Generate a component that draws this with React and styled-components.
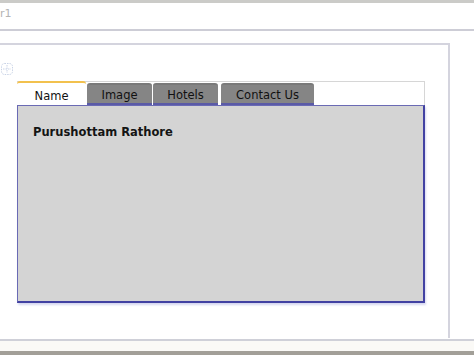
import React from "react";
import styled, { createGlobalStyle } from "styled-components";

const GlobalStyle = createGlobalStyle`
  html, body {
    margin: 0;
    padding: 0;
    background: #ffffff;
  }
  body {
    width: 474px;
    height: 355px;
    overflow: hidden;
    font-family: "DejaVu Sans", Tahoma, sans-serif;
  }
`;

// ---------- Designer frame ----------
const Page = styled.div`
  display: flex;
  flex-direction: column;
  align-items: flex-start;
  width: 474px;
  height: 355px;
  background: #ffffff;
`;

const TopStrip = styled.div`
  align-self: stretch;
  height: 3px;
  background: #cbcbc8;
`;

const TitleRow = styled.div`
  align-self: stretch;
  height: 28px;
  padding: 4px 0 0 0;
  box-sizing: border-box;
  color: #b4b4b4;
  font-size: 11px;
  border-bottom: 2px solid #cdcdd6;
`;

const Spacer = styled.div`
  height: 12px;
`;

const Panel = styled.div`
  width: 448px;
  height: 293px;
  box-sizing: content-box;
  border-top: 2px solid #d4d4de;
  border-right: 2px solid #d4d4de;
  display: flex;
  flex-direction: column;
`;

const Glyph = styled.div`
  height: 14px;
  margin: 17px 0 5px 0;
  display: flex;
`;

const BottomLine = styled.div`
  align-self: stretch;
  height: 2px;
  margin-top: 1px;
  background: #cfd0d8;
`;

const BottomFill = styled.div`
  align-self: stretch;
  flex: 1;
  background: #faf9f6;
`;

const StatusBar = styled.div`
  align-self: stretch;
  height: 4px;
  background: #a29f98;
`;

// ---------- Tab control ----------
const TabControl = styled.div`
  width: 408px;
  margin-left: 17px;
  display: flex;
  flex-direction: column;
`;

const TabHeader = styled.div`
  height: 24px;
  display: flex;
  align-items: flex-end;
  gap: 1px;
  border-top: 1px solid #d6d6d6;
  border-right: 1px solid #d6d6d6;
  box-sizing: border-box;
`;

const Tab = styled.div`
  box-sizing: border-box;
  height: ${({ $active }) => ($active ? "24px" : "22px")};
  margin-top: ${({ $active }) => ($active ? "-1px" : "0")};
  min-width: ${({ $width }) => $width}px;
  display: flex;
  align-items: center;
  justify-content: center;
  font-size: 11.5px;
  color: #111111;
  background: ${({ $active }) => ($active ? "#ffffff" : "#858585")};
  border-top: 2px solid ${({ $active }) => ($active ? "#f2c14e" : "#7a7a7a")};
  border-bottom: ${({ $active }) => ($active ? "none" : "2px solid #5a5aa6")};
  border-radius: 3px 3px 0 0;
  padding-top: ${({ $active }) => ($active ? "3px" : "1px")};
  margin-right: ${({ $gap }) => $gap}px;
`;

const TabBody = styled.div`
  box-sizing: border-box;
  height: 198px;
  background: #d4d4d4;
  border: 1px solid #6a6ab4;
  border-right: 2px solid #4242a2;
  border-bottom: 2px solid #4242a2;
  box-shadow: 1px 2px 2px #d6d8f0;
  padding: 19px 15px;
`;

const Name = styled.div`
  font-size: 11.5px;
  font-weight: bold;
  color: #141414;
`;

const MoveGlyph = () => (
  <svg width="15" height="14" viewBox="0 0 15 14">
    <g fill="none" stroke="#c9d3e6" strokeWidth="1" strokeDasharray="1.5 1">
      <rect x="1.5" y="1.5" width="11" height="11" rx="3" />
      <path d="M7 3v8M3 7h8" />
    </g>
  </svg>
);

const tabs = [
  { label: "Name", width: 69, gap: 0 },
  { label: "Image", width: 65, gap: 0 },
  { label: "Hotels", width: 65, gap: 2 },
  { label: "Contact Us", width: 93, gap: 0 },
];

export default function App() {
  return (
    <>
      <GlobalStyle />
      <Page>
        <TopStrip />
        <TitleRow>r1</TitleRow>
        <Spacer />
        <Panel>
          <Glyph>
            <MoveGlyph />
          </Glyph>
          <TabControl>
            <TabHeader>
              {tabs.map((t, i) => (
                <Tab key={t.label} $active={i === 0} $width={t.width} $gap={t.gap}>
                  {t.label}
                </Tab>
              ))}
            </TabHeader>
            <TabBody>
              <Name>Purushottam Rathore</Name>
            </TabBody>
          </TabControl>
        </Panel>
        <BottomLine />
        <BottomFill />
        <StatusBar />
      </Page>
    </>
  );
}
